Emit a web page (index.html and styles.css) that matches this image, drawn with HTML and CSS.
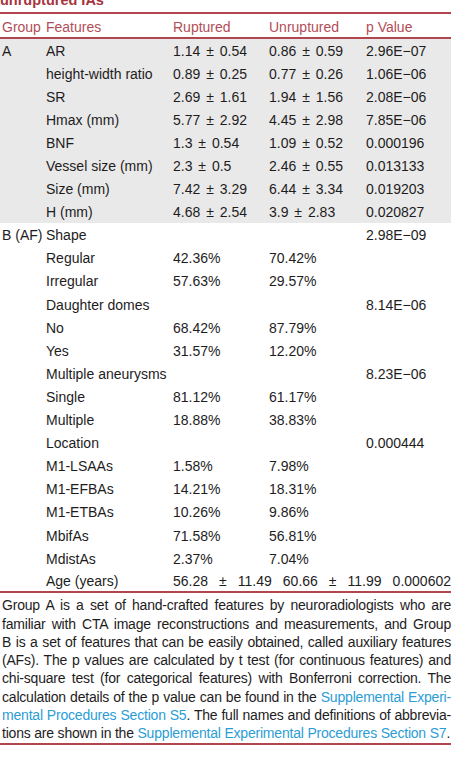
FILE: index.html
```html
<!DOCTYPE html>
<html lang="en">
<head>
<meta charset="utf-8">
<title>Features of ruptured and unruptured IAs</title>
<link rel="stylesheet" href="styles.css">
</head>
<body>
<div class="sheet">
  <div class="title">unruptured IAs</div>
  <table class="data">
    <colgroup>
      <col class="c-group">
      <col class="c-feat">
      <col class="c-rup">
      <col class="c-unrup">
      <col class="c-p">
    </colgroup>
    <thead>
      <tr>
        <th>Group</th>
        <th>Features</th>
        <th>Ruptured</th>
        <th>Unruptured</th>
        <th>p Value</th>
      </tr>
    </thead>
    <tbody class="grp-a">
      <tr><td>A</td><td>AR</td><td class="num">1.14 ± 0.54</td><td class="num">0.86 ± 0.59</td><td>2.96E−07</td></tr>
      <tr><td></td><td>height-width ratio</td><td class="num">0.89 ± 0.25</td><td class="num">0.77 ± 0.26</td><td>1.06E−06</td></tr>
      <tr><td></td><td>SR</td><td class="num">2.69 ± 1.61</td><td class="num">1.94 ± 1.56</td><td>2.08E−06</td></tr>
      <tr><td></td><td>Hmax (mm)</td><td class="num">5.77 ± 2.92</td><td class="num">4.45 ± 2.98</td><td>7.85E−06</td></tr>
      <tr><td></td><td>BNF</td><td class="num">1.3 ± 0.54</td><td class="num">1.09 ± 0.52</td><td>0.000196</td></tr>
      <tr><td></td><td>Vessel size (mm)</td><td class="num">2.3 ± 0.5</td><td class="num">2.46 ± 0.55</td><td>0.013133</td></tr>
      <tr><td></td><td>Size (mm)</td><td class="num">7.42 ± 3.29</td><td class="num">6.44 ± 3.34</td><td>0.019203</td></tr>
      <tr><td></td><td>H (mm)</td><td class="num">4.68 ± 2.54</td><td class="num">3.9 ± 2.83</td><td>0.020827</td></tr>
    </tbody>
    <tbody class="grp-b">
      <tr><td>B (AF)</td><td>Shape</td><td></td><td></td><td>2.98E−09</td></tr>
      <tr><td></td><td>Regular</td><td>42.36%</td><td>70.42%</td><td></td></tr>
      <tr><td></td><td>Irregular</td><td>57.63%</td><td>29.57%</td><td></td></tr>
      <tr><td></td><td>Daughter domes</td><td></td><td></td><td>8.14E−06</td></tr>
      <tr><td></td><td>No</td><td>68.42%</td><td>87.79%</td><td></td></tr>
      <tr><td></td><td>Yes</td><td>31.57%</td><td>12.20%</td><td></td></tr>
      <tr><td></td><td>Multiple aneurysms</td><td></td><td></td><td>8.23E−06</td></tr>
      <tr><td></td><td>Single</td><td>81.12%</td><td>61.17%</td><td></td></tr>
      <tr><td></td><td>Multiple</td><td>18.88%</td><td>38.83%</td><td></td></tr>
      <tr><td></td><td>Location</td><td></td><td></td><td>0.000444</td></tr>
      <tr><td></td><td>M1-LSAAs</td><td>1.58%</td><td>7.98%</td><td></td></tr>
      <tr><td></td><td>M1-EFBAs</td><td>14.21%</td><td>18.31%</td><td></td></tr>
      <tr><td></td><td>M1-ETBAs</td><td>10.26%</td><td>9.86%</td><td></td></tr>
      <tr><td></td><td>MbifAs</td><td>71.58%</td><td>56.81%</td><td></td></tr>
      <tr><td></td><td>MdistAs</td><td>2.37%</td><td>7.04%</td><td></td></tr>
      <tr><td></td><td>Age (years)</td><td class="age" colspan="3">56.28 ± 11.49 60.66 ± 11.99 0.000602</td></tr>
    </tbody>
  </table>
  <div class="note">
    <span class="ln">Group A is a set of hand-crafted features by neuroradiologists who are</span>
    <span class="ln">familiar with CTA image reconstructions and measurements, and Group</span>
    <span class="ln">B is a set of features that can be easily obtained, called auxiliary features</span>
    <span class="ln">(AFs). The p values are calculated by t test (for continuous features) and</span>
    <span class="ln">chi-square test (for categorical features) with Bonferroni correction. The</span>
    <span class="ln">calculation details of the p value can be found in the <a class="ref" href="#s5">Supplemental Experi-</a></span>
    <span class="ln"><a class="ref" href="#s5">mental Procedures Section S5</a>. The full names and definitions of abbrevia-</span>
    <span class="ln last">tions are shown in the <a class="ref" href="#s7">Supplemental Experimental Procedures Section S7</a>.</span>
  </div>
</div>
</body>
</html>
```

FILE: styles.css
```css
html, body {
  margin: 0;
  padding: 0;
  background: #ffffff;
}

body {
  font-family: "Liberation Sans", Arial, Helvetica, sans-serif;
  font-size: 14px;
  color: #1e1c1d;
}

.sheet {
  width: 451px;
}

.title {
  font-weight: bold;
  font-size: 14.5px;
  line-height: 14px;
  color: #a5343e;
  margin-top: -7px;
  margin-bottom: 5px;
  white-space: nowrap;
}

.data {
  width: 451px;
  table-layout: fixed;
  border-collapse: collapse;
  border-top: 2px solid #b3454e;
  border-bottom: 2px solid #b3454e;
}

.c-group { width: 46px; }
.c-feat { width: 127px; }
.c-rup { width: 96px; }
.c-unrup { width: 97px; }
.c-p { width: 85px; }

.data th,
.data td {
  padding: 0;
  text-align: left;
  white-space: nowrap;
  vertical-align: middle;
}

.data th {
  font-weight: normal;
  color: #b24d57;
  height: 21px;
  padding-top: 2px;
  border-bottom: 2px solid #b3454e;
}

.data th:first-child,
.data td:first-child {
  padding-left: 2px;
}

.data td {
  height: 23.1px;
  padding-top: 2px;
  box-sizing: border-box;
}

.grp-a td {
  background: #e9e9e9;
}

.num {
  word-spacing: 2px;
}

.data td.age {
  white-space: normal;
  text-align: justify;
  text-align-last: justify;
  padding-right: 0;
}

.note {
  padding: 3px 0 0 2px;
  line-height: 18.3px;
  letter-spacing: -0.2px;
  border-bottom: 2px solid #b3454e;
}

.ln {
  display: block;
  text-align: justify;
  text-align-last: justify;
}

.ln.last {
  text-align-last: left;
}

.ref {
  color: #2b9dd6;
  text-decoration: none;
}
```
